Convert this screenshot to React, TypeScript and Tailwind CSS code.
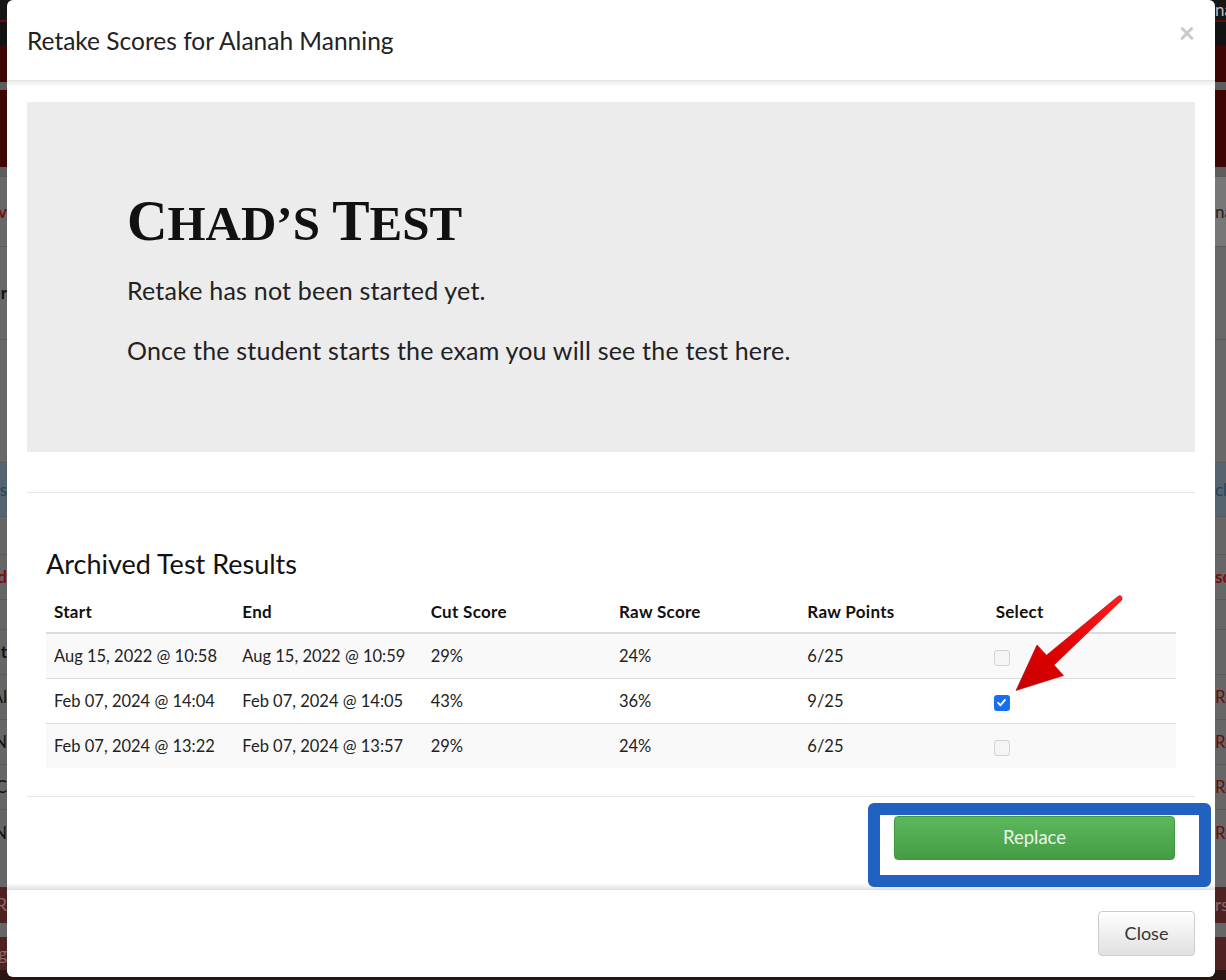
import React from "react";

type BgRow = {
  h: number;
  bg: string;
  left?: string;
  leftCls?: string;
  right?: string;
  rightCls?: string;
  rightBg?: string;
  line?: boolean;
};

const bgRows: BgRow[] = [
  { h: 20, bg: "bg-[#161616]", right: "na", rightCls: "text-[#bdbdbd]" },
  { h: 2, bg: "bg-[#5a1010]" },
  { h: 23, bg: "bg-[#121212]" },
  { h: 37, bg: "bg-[#3e0505]" },
  { h: 8, bg: "bg-[#5d5d5d]" },
  { h: 77, bg: "bg-[#3e0505]" },
  { h: 10, bg: "bg-[#5d5d5d]", line: true },
  { h: 70, bg: "bg-[#686868]", left: "Activ", leftCls: "text-[#7a0c0c] font-bold", right: "name", rightCls: "text-[#222]", rightBg: "bg-[#777777]", line: true },
  { h: 93, bg: "bg-[#686868]", left: "Enter", leftCls: "text-[#111] font-bold", line: true },
  { h: 123, bg: "bg-[#686868]", line: true },
  { h: 54, bg: "bg-[#55646e]", left: "Tests", leftCls: "text-[#24465c]", right: "cl", rightCls: "text-[#24465c]", line: true },
  { h: 38, bg: "bg-[#666666]", line: true },
  { h: 45, bg: "bg-[#666666]", left: "Archived", leftCls: "text-[#7a0c0c] font-bold", right: "sc", rightCls: "text-[#7a0c0c] font-bold", line: true },
  { h: 30, bg: "bg-[#666666]", line: true },
  { h: 45, bg: "bg-[#666666]", left: "Student", leftCls: "text-[#111] font-bold", line: true },
  { h: 45, bg: "bg-[#666666]", left: "Al", leftCls: "text-[#111]", right: "Re", rightCls: "text-[#6a0c0c]", line: true },
  { h: 45, bg: "bg-[#666666]", left: "AN", leftCls: "text-[#111]", right: "Re", rightCls: "text-[#6a0c0c]", line: true },
  { h: 45, bg: "bg-[#666666]", left: "AC", leftCls: "text-[#111]", right: "Re", rightCls: "text-[#6a0c0c]", line: true },
  { h: 45, bg: "bg-[#666666]", left: "AN", leftCls: "text-[#111]", right: "Re", rightCls: "text-[#6a0c0c]" },
  { h: 32, bg: "bg-[#666666]" },
  { h: 36, bg: "bg-[#4f2222]", left: "RR", leftCls: "text-[#8a6a6a]", right: "rs", rightCls: "text-[#8a6a6a]" },
  { h: 14, bg: "bg-[#666666]" },
  { h: 33, bg: "bg-[#4f2222]", left: "Log", leftCls: "text-[#8a6a6a]" },
  { h: 10, bg: "bg-[#2a1515]" },
];

const rows = [
  { start: "Aug 15, 2022 @ 10:58", end: "Aug 15, 2022 @ 10:59", cut: "29%", raw: "24%", pts: "6/25", checked: false },
  { start: "Feb 07, 2024 @ 14:04", end: "Feb 07, 2024 @ 14:05", cut: "43%", raw: "36%", pts: "9/25", checked: true },
  { start: "Feb 07, 2024 @ 13:22", end: "Feb 07, 2024 @ 13:57", cut: "29%", raw: "24%", pts: "6/25", checked: false },
];

function CheckBox({ checked }: { checked: boolean }) {
  if (checked) {
    return (
      <span className="inline-flex h-[16px] w-[16px] items-center justify-center rounded-[3px] bg-[#1670ee] align-middle">
        <svg width="11" height="11" viewBox="0 0 12 12">
          <path d="M2.3 6.4 L4.9 9 L9.8 3.2" fill="none" stroke="#fff" strokeWidth="2.1" strokeLinecap="round" strokeLinejoin="round" />
        </svg>
      </span>
    );
  }
  return <span className="inline-block h-[16px] w-[16px] rounded-[3px] border border-[#d2d2d2] bg-[#f5f5f5] align-middle" />;
}

export default function App() {
  return (
    <div className="relative h-[980px] w-[1226px] overflow-hidden bg-[#666666] font-[Lato,sans-serif] text-[16px]">
      {/* dimmed page behind the dialog */}
      <div className="flex flex-col">
        {bgRows.map((r, i) => (
          <div
            key={i}
            className={`flex items-center justify-between ${r.bg} ${r.line ? "border-b border-[#5a5a5a]" : ""}`}
            style={{ height: r.h }}
          >
            <div className="flex h-full w-[7px] items-center justify-end overflow-hidden">
              {r.left && <span className={`whitespace-nowrap text-[17px] ${r.leftCls ?? ""}`}>{r.left}</span>}
            </div>
            <div className={`flex h-full w-[11px] items-center overflow-hidden ${r.rightBg ?? ""}`}>
              {r.right && <span className={`whitespace-nowrap text-[17px] ${r.rightCls ?? ""}`}>{r.right}</span>}
            </div>
          </div>
        ))}
      </div>

      {/* dialog */}
      <div className="absolute left-[7px] top-0 flex h-[977px] w-[1208px] flex-col overflow-hidden rounded-[6px] bg-white">
        <div className="flex h-[81px] items-start justify-between border-b border-[#e5e5e5] pl-[20px] pr-[20px]">
          <h4 className="mt-[26px] text-[24.5px] leading-[30px] text-[#222]">Retake Scores for Alanah Manning</h4>
          <span className="mt-[14px] text-[28px] font-bold leading-[36px] text-[#c8c8c8]">×</span>
        </div>

        <div className="relative flex-1 px-[20px] pt-[21px]">
          <div className="pointer-events-none absolute left-0 right-0 top-0 h-[6px] bg-gradient-to-b from-[#ececec] to-white" />

          <div className="h-[350px] bg-[#ececec] pl-[100px] pt-[87px]">
            <h2 className="font-['Liberation_Serif',serif] font-bold leading-[64px] text-[#111]">
              <span className="text-[56px]">C</span>
              <span className="text-[49px]">HAD’S </span>
              <span className="text-[56px]">T</span>
              <span className="text-[49px]">EST</span>
            </h2>
            <p className="mt-[8px] text-[25px] leading-[30px] tracking-[0.2px] text-[#222]">Retake has not been started yet.</p>
            <p className="mt-[30px] text-[25px] leading-[30px] tracking-[0.2px] text-[#222]">Once the student starts the exam you will see the test here.</p>
          </div>

          <div className="mt-[40px] border-t border-[#e6e6e6]" />

          <div className="px-[19px]">
            <h3 className="mt-[57px] text-[27px] leading-[28px] text-[#111]">Archived Test Results</h3>

            <table className="mt-[14px] w-full table-fixed border-collapse text-[16.5px] text-[#222]">
              <thead>
                <tr className="border-b-2 border-[#dddddd]">
                  {["Start", "End", "Cut Score", "Raw Score", "Raw Points", "Select"].map((h) => (
                    <th key={h} className="px-[8px] py-[9px] text-left text-[17px] font-bold leading-[22px] tracking-[0.3px] text-[#111]">
                      {h}
                    </th>
                  ))}
                </tr>
              </thead>
              <tbody>
                {rows.map((r, i) => (
                  <tr key={i} className={`${i > 0 ? "border-t border-[#dddddd]" : ""} ${i % 2 === 0 ? "bg-[#f9f9f9]" : "bg-white"}`}>
                    <td className="px-[8px] py-[11px] leading-[22px]">{r.start}</td>
                    <td className="px-[8px] py-[11px] leading-[22px]">{r.end}</td>
                    <td className="px-[8px] py-[11px] leading-[22px]">{r.cut}</td>
                    <td className="px-[8px] py-[11px] leading-[22px]">{r.raw}</td>
                    <td className="px-[8px] py-[11px] leading-[22px]">{r.pts}</td>
                    <td className="px-[6px] py-[11px] leading-[22px]">
                      <CheckBox checked={r.checked} />
                    </td>
                  </tr>
                ))}
              </tbody>
            </table>
          </div>

          <div className="mt-[28px] border-t border-[#e6e6e6]" />

          <div className="flex justify-end pr-[20px] pt-[19px]">
            <button className="h-[44px] w-[281px] rounded-[4px] border border-[#419641] bg-gradient-to-b from-[#5cb85c] to-[#449d44] text-[18.5px] text-[#eaf6ea]">
              Replace
            </button>
          </div>

          <div className="pointer-events-none absolute bottom-0 left-0 right-0 h-[6px] bg-gradient-to-t from-[#e6e6e6] to-white" />
        </div>

        <div className="flex h-[88px] justify-end border-t border-[#e0e0e0] pr-[20px] pt-[21px]">
          <button className="h-[45px] w-[97px] rounded-[4px] border border-[#cccccc] bg-gradient-to-b from-white to-[#e0e0e0] text-[18px] text-[#333]">
            Close
          </button>
        </div>
      </div>

      {/* callout around the replace action */}
      <div className="pointer-events-none absolute left-[868px] top-[803px] h-[84px] w-[343px] rounded-[6px] border-[12px] border-[#2161c0]" />

      {/* pointer arrow toward the chosen row */}
      <svg className="pointer-events-none absolute left-0 top-0" width="1226" height="980" viewBox="0 0 1226 980">
        <defs>
          <linearGradient id="arrowFill" x1="1120" y1="598" x2="1016" y2="690" gradientUnits="userSpaceOnUse">
            <stop offset="0" stopColor="#ff1e1e" />
            <stop offset="0.6" stopColor="#e00000" />
            <stop offset="1" stopColor="#c40000" />
          </linearGradient>
        </defs>
        <path
          d="M1118.2 596.3 L1046.5 655.2 L1037 645 L1016 690.5 L1063.5 675.5 L1054 665 L1121.8 600 Q1123 597 1120 595.5 Z"
          fill="url(#arrowFill)"
          stroke="#b00000"
          strokeWidth="0.6"
          strokeLinejoin="round"
        />
      </svg>
    </div>
  );
}
